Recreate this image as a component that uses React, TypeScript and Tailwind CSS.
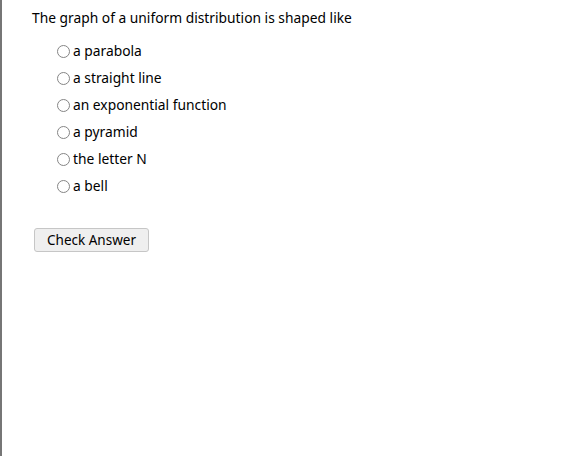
const options = [
  'a parabola',
  'a straight line',
  'an exponential function',
  'a pyramid',
  'the letter N',
  'a bell',
]

export default function App() {
  return (
    <div
      className="h-[456px] w-[581px] border-l-2 border-[#767676] bg-white text-[13.8px] text-black"
      style={{ fontFamily: '"Noto Sans", "Open Sans", sans-serif' }}
    >
      <div className="pl-[30px] pt-[9px]">
        <p className="leading-[18px]">The graph of a uniform distribution is shaped like</p>
        <div className="mt-[15px] flex flex-col gap-[9px] pl-[25px]">
          {options.map((o) => (
            <label key={o} className="flex h-[18px] items-center gap-[3px]">
              <span className="h-[13px] w-[13px] shrink-0 rounded-full border border-[#858585] bg-white" />
              <span>{o}</span>
            </label>
          ))}
        </div>
        <button className="mt-[33px] ml-[2px] h-[24px] w-[115px] rounded-[3px] border border-[#c6c6c6] bg-[#efefef] text-[13.5px]">
          Check Answer
        </button>
      </div>
    </div>
  )
}
